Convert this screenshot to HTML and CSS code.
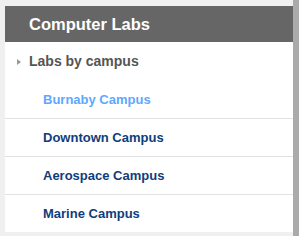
FILE: index.html
```html
<!DOCTYPE html>
<html lang="en">
<head>
    <meta charset="UTF-8">
    <meta name="viewport" content="width=device-width, initial-scale=1.0">
    <title>Computer Labs</title>
    <link rel="stylesheet" href="styles.css">
</head>
<body>
    <div class="page">
        <nav class="side-nav">
            <h2 class="nav-title">Computer Labs</h2>
            <div class="nav-section">
                <span class="arrow"></span>
                Labs by campus
            </div>
            <ul class="nav-list">
                <li><a href="#" class="active">Burnaby Campus</a></li>
                <li><a href="#">Downtown Campus</a></li>
                <li><a href="#">Aerospace Campus</a></li>
                <li><a href="#">Marine Campus</a></li>
            </ul>
        </nav>
    </div>
    <div class="scrollbar"></div>
</body>
</html>
```

FILE: styles.css
```css
:root {
    --header-color: #666;
    --section-color: #555;
    --link-color: #0f3d7b;
    --active-color: #5ea8ff;
    --line-color: #e2e2e2;
}

body {
    margin: 0;
    font-family: 'Liberation Sans', Arial, sans-serif;
    background-color: #f0f0f0;
    display: flex;
    height: 236px;
    overflow: hidden;
}

.page {
    flex: 1;
    padding: 6px 0 0 5px;
}

.side-nav {
    background-color: white;
}

.nav-title {
    margin: 0;
    height: 36px;
    line-height: 36px;
    padding-left: 24px;
    background-color: var(--header-color);
    color: white;
    font-size: 16.5px;
    font-weight: bold;
}

.nav-section {
    height: 39px;
    line-height: 39px;
    padding-left: 24px;
    position: relative;
    color: var(--section-color);
    font-size: 14px;
    font-weight: bold;
}

.arrow {
    position: absolute;
    left: 12px;
    top: 17px;
    width: 0;
    height: 0;
    border-top: 3px solid transparent;
    border-bottom: 3px solid transparent;
    border-left: 4px solid #999;
}

.nav-list {
    list-style: none;
    margin: 0;
    padding: 0;
}

.nav-list li {
    border-bottom: 1px solid var(--line-color);
}

.nav-list li:last-child {
    border-bottom: none;
}

.nav-list a {
    display: block;
    height: 37px;
    line-height: 37px;
    padding-left: 38px;
    color: var(--link-color);
    font-size: 13px;
    font-weight: bold;
    text-decoration: none;
}

.nav-list a.active {
    color: var(--active-color);
}

.scrollbar {
    width: 6px;
    background-color: #aaa;
}
```
